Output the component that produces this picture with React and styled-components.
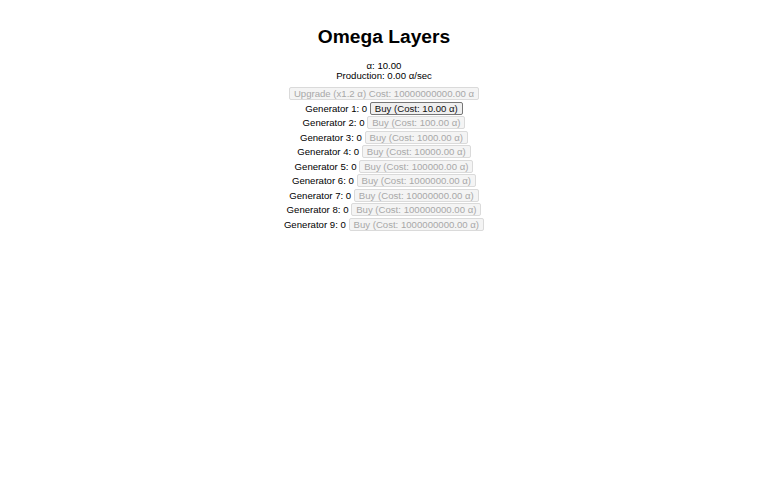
import styled, { createGlobalStyle } from "styled-components";

const GlobalStyle = createGlobalStyle`
  body {
    margin: 0;
    background: #ffffff;
    font-family: "Liberation Sans", Arial, sans-serif;
    color: #000000;
  }
`;

// styles
const Page = styled.div`
  padding-top: 26px;
  text-align: center;
  font-size: 9.6px;
`;

const Title = styled.h1`
  margin: 0 0 13.4px;
  font-size: 19.2px;
  line-height: 22px;
  font-weight: 700;
`;

const Stats = styled.div`
  margin-bottom: 5.3px;
`;

const StatLine = styled.div`
  line-height: 10px;
`;

const Row = styled.div`
  display: flex;
  align-items: center;
  justify-content: center;
  gap: 2.7px;
  height: 14.5px;
`;

const Label = styled.span`
  line-height: 11px;
`;

const Button = styled.button`
  font-family: inherit;
  font-size: 9.6px;
  line-height: 11px;
  height: 13px;
  padding: 0 4px;
  border-radius: 2px;
  border: 1px solid ${(props) => (props.disabled ? "#dadada" : "#767676")};
  background-color: ${(props) => (props.disabled ? "#f4f4f4" : "#efefef")};
  color: ${(props) => (props.disabled ? "#a8a8a8" : "#101010")};
  cursor: ${(props) => (props.disabled ? "default" : "pointer")};
`;

const alpha = 10;
const generators = Array.from({ length: 9 }, (_, i) => ({
  id: i + 1,
  amount: 0,
  cost: Math.pow(10, i + 1),
}));

// page
const App = () => {
  return (
    <>
      <GlobalStyle />
      <Page>
        <Title>Omega Layers</Title>
        <Stats>
          <StatLine>α: {alpha.toFixed(2)}</StatLine>
          <StatLine>Production: 0.00 α/sec</StatLine>
        </Stats>
        <Row>
          <Button disabled>Upgrade (x1.2 α) Cost: 10000000000.00 α</Button>
        </Row>
        {generators.map((g) => (
          <Row key={g.id}>
            <Label>
              Generator {g.id}: {g.amount}
            </Label>
            <Button disabled={g.cost > alpha}>
              Buy (Cost: {g.cost.toFixed(2)} α)
            </Button>
          </Row>
        ))}
      </Page>
    </>
  );
};

export default App;
